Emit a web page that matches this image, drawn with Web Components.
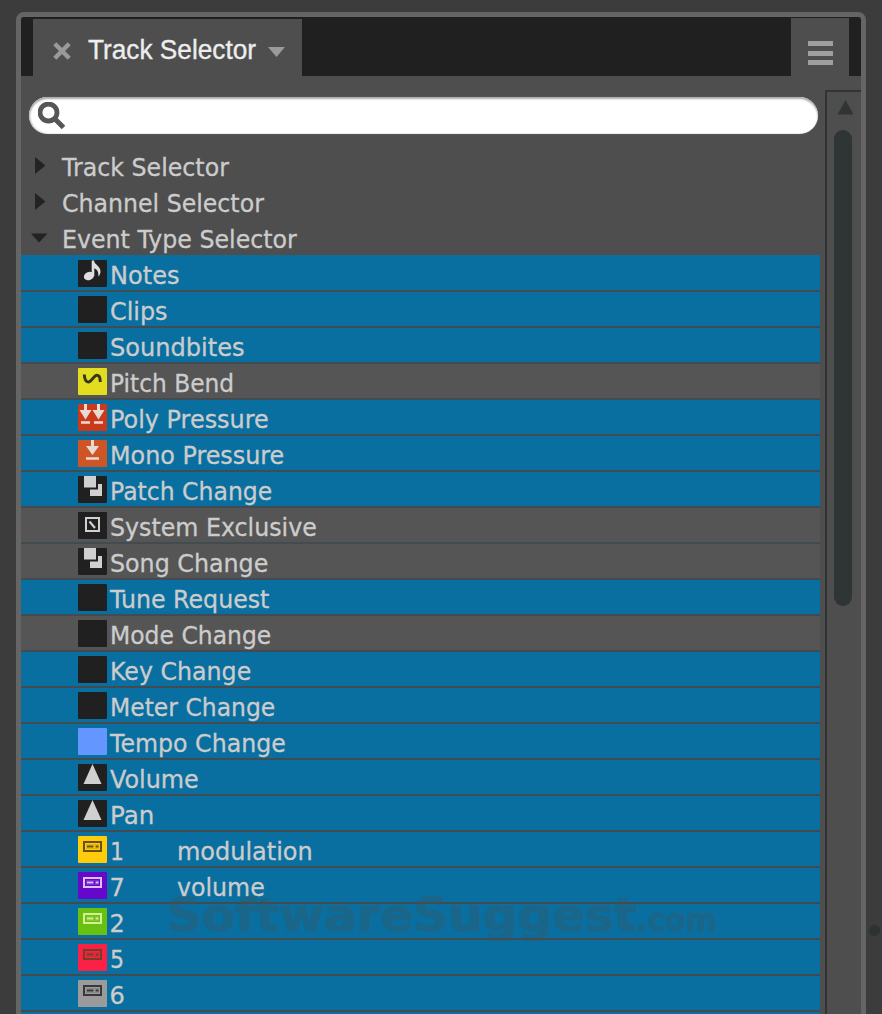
<!DOCTYPE html>
<html lang="en"><head><meta charset="utf-8"><title>Track Selector</title>
<style>html,body{margin:0;height:100%;overflow:hidden;background:#3c3c3c}</style></head>
<body><app-window></app-window>
<script>
const define=(name,html,setup)=>{
  const t=document.createElement('template');t.innerHTML=html;
  customElements.define(name,class extends HTMLElement{
    constructor(){super();this.attachShadow({mode:'open'}).append(t.content.cloneNode(true));}
    connectedCallback(){if(setup)setup(this,this.shadowRoot);}
  });
};
const svg=(s)=>`<svg width="29" height="27" viewBox="0 0 29 27">${s}</svg>`;
const deck=(c)=>`<path d="M5 5h19v11H5zM7 7v7h15v-7z" fill="${c}" fill-rule="evenodd"/><path d="M8.500 8.500h12v4h-12z" fill="none" stroke="${c}" stroke-width="1" opacity=".2"/><path d="M9 10.500h6.500M17.500 10.500h3" stroke="${c}" stroke-width="2"/>`;
const patch='<path d="M6 0h12v11.500H6zM20 8h4v12H12v-6.500h8z" fill="#d0d0d0"/>';
const ICONS={
 none:['#202020',''],
 note:['#202020','<ellipse cx="11" cy="16" rx="5.300" ry="4" transform="rotate(-22 11 16)" fill="#dedede"/><path d="M15 16V0.500" stroke="#dedede" stroke-width="2.600"/><path d="M15.500 .5c1 4 7 5.500 7 11 0 2-.8 3.600-2.200 5 .5-4.500-.8-7-5-8.700z" fill="#dedede"/>'],
 bend:['#e3dd20','<path d="M6.300 6.500c.2 4 1.500 7.500 4 7.500 3.500 0 5.500-6.800 8.500-6.800 2 0 3.500 2.300 3.500 6.800" fill="none" stroke="#353520" stroke-width="3"/>'],
 poly:['#cc3a1c','<path d="M7.500 0v7M20.500 0v7" stroke="#e6dcd4" stroke-width="3"/><path d="M1.500 6h12l-6 9.500zM14.500 6h12l-6 9.500z" fill="#e6dcd4"/><path d="M3 18.500h9M16 18.500h9" stroke="#e6dcd4" stroke-width="2.400"/>'],
 mono:['#cf5426','<path d="M14.500 0v8" stroke="#e6dcd4" stroke-width="3"/><path d="M8 6h13l-6.500 9z" fill="#e6dcd4"/><path d="M8 18.500h13" stroke="#e6dcd4" stroke-width="2.400"/>'],
 patch:['#202020',patch],
 sysex:['#202020','<rect x="8" y="6" width="13" height="13" fill="none" stroke="#d0d0d0" stroke-width="2"/><path d="M11.500 9.500l5.500 6.500" stroke="#d0d0d0" stroke-width="2.200"/>'],
 tempo:['#6496ff',''],
 tri:['#202020','<path d="M14.500 0L23.500 20H5.500z" fill="#d0d0d0"/>'],
 d1:['#ffcc0c',deck('#66511c')],d7:['#6608ca',deck('#dcc0f5')],d2:['#68c010',deck('#d8ed98')],
 d5:['#fb2146',deck('#6c4221')],d6:['#9b9b9b',deck('#383838')]
};
const ctx=document.createElement('canvas').getContext('2d');

define('fit-label',`<style>:host{display:block;height:36px;white-space:nowrap;color:#cccccc;font:24px/36px "DejaVu Sans",sans-serif;-webkit-text-stroke:.3px currentColor}
span{display:inline-block;transform-origin:0 0}</style><span></span>`,(h,r)=>{
  const s=r.querySelector('span');s.textContent=h.getAttribute('text');
  const ink=+h.getAttribute('ink'),cs=getComputedStyle(h);
  ctx.font=`${cs.fontWeight} ${cs.fontSize} ${cs.fontFamily}`;
  const m=ctx.measureText(s.textContent);
  const k=ink/(m.actualBoundingBoxLeft+m.actualBoundingBoxRight);
  s.style.transform=`scaleX(${k})`;
});

define('event-icon',`<style>:host{display:block;width:29px;height:27px;border-radius:1px;overflow:hidden}svg{display:block}</style><div></div>`,(h,r)=>{
  const [bg,s]=ICONS[h.getAttribute('kind')];h.style.background=bg;r.querySelector('div').innerHTML=svg(s);
});

define('event-row',`<style>:host{display:flex;box-sizing:border-box;width:799px;height:36px;padding-left:57px;background:#555;border-bottom:2px solid #424b50}
:host([on]){background:#096fa0}
event-icon{margin-top:4px}.a{margin:2px 0 0 2.600px;width:0}.b{margin:2px 0 0 67px;width:0}</style>
<event-icon></event-icon><fit-label class="a"></fit-label>`,(h,r)=>{
  const g=n=>h.getAttribute(n);
  r.querySelector('event-icon').setAttribute('kind',g('kind'));
  if(g('second')){const b=document.createElement('fit-label');b.className='b';
    b.setAttribute('text',g('second'));b.setAttribute('ink',g('ink2'));r.append(b);}
});
define('tree-row',`<style>:host{display:flex;height:36px;padding-left:9px}svg{width:31px;height:36px;flex:none}fit-label{margin:2px 0 0 .8px}</style>
<svg viewBox="0 0 31 36"><path fill="#232323"/></svg><fit-label></fit-label>`,(h,r)=>{
  r.querySelector('path').setAttribute('d',h.hasAttribute('open')?'M1 13.500H17.500L9 22.500z':'M5 9L15.500 17.500L5 26z');
});
/* Labels are filled in before the row is attached so that each can measure its own text. */
const rowMarkup=(tag,attrs)=>{const e=document.createElement(tag);for(const k in attrs)e.setAttribute(k,attrs[k]);
  const l=e.shadowRoot.querySelector('fit-label');if(!attrs.text){l.remove();return e;}
  l.setAttribute('text',attrs.text);l.setAttribute('ink',attrs.ink);return e;};

define('tab-bar',`<style>:host{display:flex;flex:none;height:59px;background:#202020;padding-left:12px}
.tab{display:flex;width:269px;margin-top:2px;background:#4e4e4e}
.x{width:18px;height:18px;margin:23px 17px 0 20px}.tab fit-label{font-family:"Liberation Sans",Arial,sans-serif;font-size:27px;color:#ededed;width:169px;margin-top:13px;-webkit-text-stroke:.35px #ededed}
.d{width:17px;height:10px;margin:28px 0 0 11px}.menu{margin:1px 12px 0 auto;width:58px;background:#4e4e4e}svg{display:block}.menu svg{margin:23px 0 0 17px}</style>
<div class="tab"><svg class="x" viewBox="0 0 18 18"><path d="M1.800 1.800l14.400 14.400M16.200 1.800L1.800 16.200" stroke="#9a9a9a" stroke-width="4.400"/></svg><fit-label text="Track Selector" ink="168"></fit-label><svg class="d" viewBox="0 0 17 10"><path d="M0 0h17l-8.500 10z" fill="#9a9a9a"/></svg></div>
<div class="menu"><svg width="25" height="25"><path d="M0 0h25v5H0zM0 10h25v5H0zM0 19h25v5H0z" fill="#9f9f9f"/></svg></div>`);
define('search-field',`<style>:host{display:block;box-sizing:border-box;width:789px;height:37px;margin:21px 0 14px 8px;border-radius:19px;background:#fff;box-shadow:inset 0 2px 2px #aaa,inset 1px 0 2px #bbb,0 0 1px #888;padding:5px 0 0 9px}svg{display:block}</style>
<svg width="28" height="28"><circle cx="10.500" cy="10.500" r="8.500" fill="none" stroke="#565656" stroke-width="4.800"/><path d="M17 17l8.500 8.500" stroke="#565656" stroke-width="5"/></svg>`);
define('scroll-bar',`<style>:host{display:block;box-sizing:border-box;width:36px;margin-top:14px;border:2px solid #303435;border-width:2px 0 0 2px}svg{display:block;margin:8px 0 0 10px}.thumb{width:18px;height:476px;margin:15px 0 0 7px;border-radius:9px;background:#2f3435}</style>
<svg width="17" height="15"><path d="M8.500 0L16.500 14.500H.5z" fill="#303435"/></svg><div class="thumb"></div>`);
define('water-mark',`<style>:host{position:absolute;left:167px;top:897px;display:flex;pointer-events:none;opacity:.3}
fit-label{font-weight:bold;font-size:46px;line-height:36px;color:#44545b;height:36px;-webkit-text-stroke:1.200px currentColor}.s{width:469px}.c{font-size:32px;line-height:46px}</style>
<fit-label class="s" text="SoftwareSuggest" ink="466"></fit-label><fit-label class="c" text=".com" ink="76"></fit-label>`);

define('app-window',`<style>:host{display:block;position:relative;height:1014px;overflow:hidden}
.panel{box-sizing:border-box;width:850px;height:1020px;margin:12px 0 0 16px;border:5px solid #656565;border-radius:8px 8px 0 0;background:#4e4e4e;overflow:hidden;display:flex;flex-direction:column}
.body{display:flex;flex:1;min-height:0}.main{width:804px;flex:none}.list{box-shadow:0 -1px #096fa0;width:799px}
:host{padding-top:.1px;box-sizing:border-box}.dot{position:absolute;left:869px;top:925px;width:11px;height:11px;border-radius:50%;background:#2d3233}</style>
<div class="panel"><tab-bar></tab-bar><div class="body"><div class="main"><search-field></search-field><div class="tree"></div><div class="list"></div></div><scroll-bar></scroll-bar></div></div><i class="dot"></i><water-mark></water-mark>`,(h,r)=>{
  const tree=r.querySelector('.tree'),list=r.querySelector('.list');
  [['Track Selector',168],['Channel Selector',201],['Event Type Selector',233,1]].forEach(([text,ink,open])=>tree.append(rowMarkup('tree-row',{text,ink,...(open&&{open:''})})));
  [['Notes','note',67,1],['Clips','none',56,1],['Soundbites','none',133,1],['Pitch Bend','bend',121,0],['Poly Pressure','poly',156,1],['Mono Pressure','mono',171.5,1],['Patch Change','patch',159.5,1],['System Exclusive','sysex',205,0],['Song Change','patch',156.5,0],['Tune Request','none',160,1],['Mode Change','none',158.5,0],['Key Change','none',138.5,1],['Meter Change','none',162.5,1],['Tempo Change','tempo',176,1],['Volume','tri',88,1],['Pan','tri',41,1],['1','d1',11,1,'modulation',132.5],['7','d7',13,1,'volume',87],['2','d2',12,1],['5','d5',12,1],['6','d6',13,1],['','none',0,1]]
  .forEach(([text,kind,ink,on,second,ink2])=>list.append(rowMarkup('event-row',{text,kind,ink,...(on&&{on:''}),...(second&&{second,ink2})})));
});
</script></body></html>
